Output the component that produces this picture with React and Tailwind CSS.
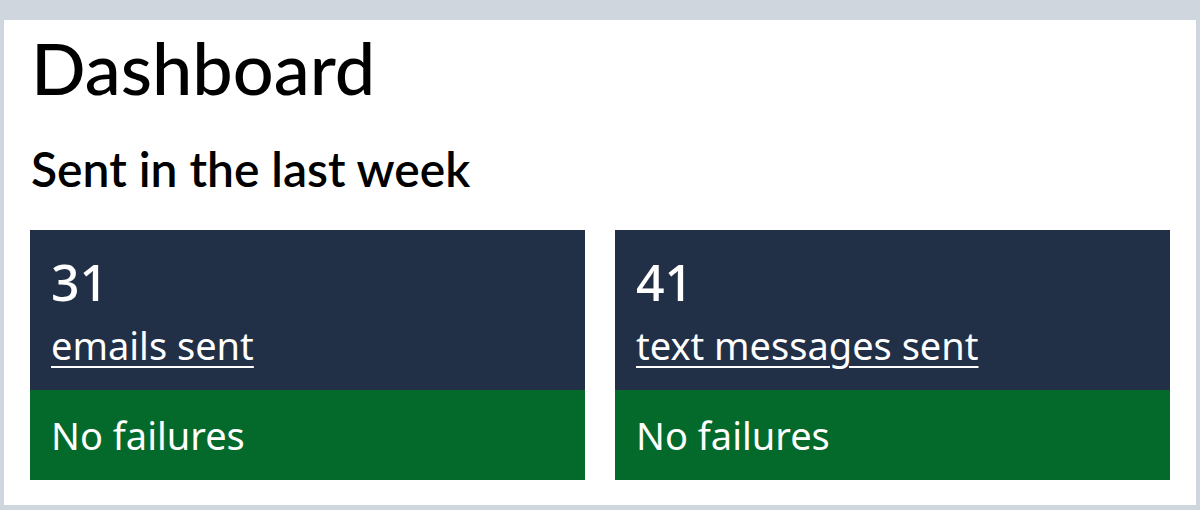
export default function App() {
  const cards = [
    { n: "31", label: "emails sent" },
    { n: "41", label: "text messages sent" },
  ];
  return (
    <div className="w-[1200px] h-[510px] bg-[#cfd6de] pt-[20px] px-[4px] pb-[5px]">
      <div className="bg-white h-full px-[26px] pt-[2px]">
        <h1 className="text-[72px] leading-[90px] text-black font-['Lato',sans-serif] font-medium pl-[1px]">
          Dashboard
        </h1>
        <h2 className="mt-[27px] text-[48px] leading-[60px] text-black font-['Lato',sans-serif] font-semibold pl-[1px]">
          Sent in the last week
        </h2>
        <div className="mt-[31px] grid grid-cols-2 gap-[30px] font-['Noto_Sans',sans-serif] text-white">
          {cards.map((c) => (
            <div key={c.n} className="flex flex-col">
              <div className="bg-[#223047] h-[160px] px-[21px] pt-[22px]">
                <div className="text-[50px] leading-[60px] font-medium">{c.n}</div>
                <a href="#" className="block mt-[9px] text-[38px] leading-[48px] underline decoration-[2px] underline-offset-[6px] w-fit">
                  {c.label}
                </a>
              </div>
              <div className="bg-[#036a2b] h-[90px] px-[21px] flex items-center text-[38px] leading-[57px]">
                No failures
              </div>
            </div>
          ))}
        </div>
      </div>
    </div>
  );
}
